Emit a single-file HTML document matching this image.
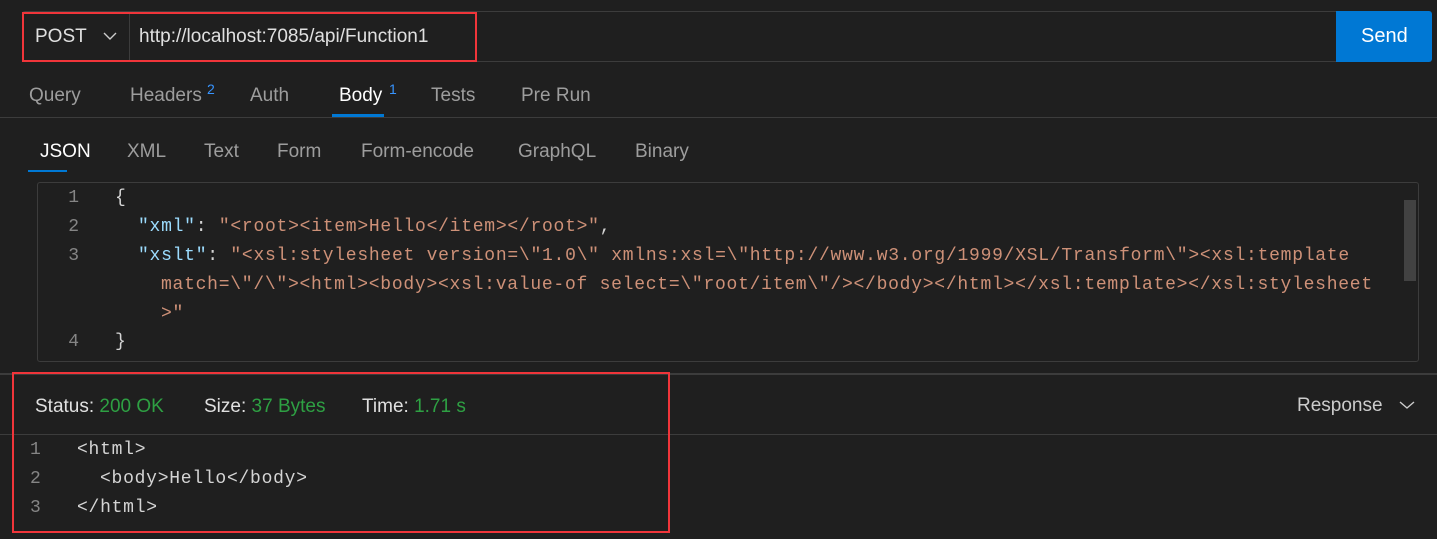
<!DOCTYPE html>
<html><head><meta charset="utf-8"><style>
*{margin:0;padding:0;box-sizing:border-box}
body{width:1437px;height:539px;background:#1f1f1f;position:relative;overflow:hidden;font-family:"Liberation Sans",sans-serif;color:#cccccc}
.a{position:absolute;white-space:pre}
.ui{font-size:19px;line-height:24px}
.mono{font-family:"Liberation Mono",monospace;font-size:18px;letter-spacing:0.74px;line-height:24px}
.k{color:#9cdcfe}.s{color:#ce9178}.p{color:#d4d4d4}
.ln{color:#858585;font-family:"Liberation Mono",monospace;font-size:18px;line-height:24px;text-align:right;width:30px}
.g{color:#2ea043}
</style></head><body>
<div class="a" style="left:22px;top:11px;width:1320px;height:51px;border:1px solid #3c3c3c;border-radius:3px"></div>
<div class="a" style="left:129px;top:12px;width:1px;height:49px;background:#3c3c3c"></div>
<div class="a" style="left:22px;top:12px;width:455px;height:50px;border:2px solid #f0353a"></div>
<div class="a ui" style="left:35px;top:25px;color:#e0e0e0">POST</div>
<svg class="a" style="left:102px;top:31px" width="16" height="10"><path d="M2 2 L8 8 L14 2" stroke="#cccccc" stroke-width="1.4" fill="none"/></svg>
<div class="a ui" style="left:139px;top:25px;color:#e0e0e0">http://localhost:7085/api/Function1</div>
<div class="a" style="left:1336px;top:11px;width:96px;height:51px;background:#0078d4;border-radius:0 3px 3px 0"></div>
<div class="a ui" style="left:1361px;top:24px;color:#fff;font-size:20px">Send</div>
<div class="a ui" style="left:29px;top:84px;color:#9d9d9d">Query</div>
<div class="a ui" style="left:130px;top:84px;color:#9d9d9d">Headers</div>
<div class="a" style="left:207px;top:81px;color:#3794ff;font-size:14px">2</div>
<div class="a ui" style="left:250px;top:84px;color:#9d9d9d">Auth</div>
<div class="a ui" style="left:339px;top:84px;color:#ffffff">Body</div>
<div class="a" style="left:389px;top:81px;color:#3794ff;font-size:14px">1</div>
<div class="a ui" style="left:431px;top:84px;color:#9d9d9d">Tests</div>
<div class="a ui" style="left:521px;top:84px;color:#9d9d9d">Pre Run</div>
<div class="a" style="left:0;top:117px;width:1437px;height:1px;background:#3c3c3c"></div>
<div class="a" style="left:332px;top:114px;width:52px;height:3px;background:#0078d4"></div>
<div class="a ui" style="left:40px;top:140px;color:#ffffff">JSON</div>
<div class="a ui" style="left:127px;top:140px;color:#9d9d9d">XML</div>
<div class="a ui" style="left:204px;top:140px;color:#9d9d9d">Text</div>
<div class="a ui" style="left:277px;top:140px;color:#9d9d9d">Form</div>
<div class="a ui" style="left:361px;top:140px;color:#9d9d9d">Form-encode</div>
<div class="a ui" style="left:518px;top:140px;color:#9d9d9d">GraphQL</div>
<div class="a ui" style="left:635px;top:140px;color:#9d9d9d">Binary</div>
<div class="a" style="left:28px;top:170px;width:39px;height:2px;background:#0078d4"></div>
<div class="a" style="left:37px;top:182px;width:1382px;height:180px;border:1px solid #3c3c3c;border-radius:3px"></div>
<div class="a" style="left:1404px;top:200px;width:12px;height:81px;background:#424242"></div>
<div class="a ln" style="left:49px;top:186px">1</div>
<div class="a ln" style="left:49px;top:215px">2</div>
<div class="a ln" style="left:49px;top:244px">3</div>
<div class="a ln" style="left:49px;top:330px">4</div>
<div class="a mono p" style="left:115px;top:186px">{</div>
<div class="a mono" style="left:138px;top:215px"><span class="k">"xml"</span><span class="p">: </span><span class="s">"&lt;root&gt;&lt;item&gt;Hello&lt;/item&gt;&lt;/root&gt;"</span><span class="p">,</span></div>
<div class="a mono" style="left:138px;top:244px"><span class="k">"xslt"</span><span class="p">: </span><span class="s">"&lt;xsl:stylesheet version=\"1.0\" xmlns:xsl=\"http://www.w3.org/1999/XSL/Transform\"&gt;&lt;xsl:template</span></div>
<div class="a mono s" style="left:161px;top:273px">match=\"/\"&gt;&lt;html&gt;&lt;body&gt;&lt;xsl:value-of select=\"root/item\"/&gt;&lt;/body&gt;&lt;/html&gt;&lt;/xsl:template&gt;&lt;/xsl:stylesheet</div>
<div class="a mono s" style="left:161px;top:302px">&gt;"</div>
<div class="a mono p" style="left:115px;top:330px">}</div>
<div class="a" style="left:0;top:373px;width:1437px;height:2px;background:#3c3c3c"></div>
<div class="a" style="left:0;top:434px;width:1437px;height:1px;background:#3c3c3c"></div>
<div class="a" style="left:12px;top:372px;width:658px;height:161px;border:2px solid #f0353a"></div>
<div class="a ui" style="left:35px;top:395px;color:#e0e0e0">Status: <span class="g">200 OK</span></div>
<div class="a ui" style="left:204px;top:395px;color:#e0e0e0">Size: <span class="g">37 Bytes</span></div>
<div class="a ui" style="left:362px;top:395px;color:#e0e0e0">Time: <span class="g">1.71 s</span></div>
<div class="a ui" style="left:1297px;top:394px;color:#cccccc">Response</div>
<svg class="a" style="left:1398px;top:400px" width="18" height="10"><path d="M2 2 L9 8 L16 2" stroke="#cccccc" stroke-width="1.4" fill="none"/></svg>
<div class="a ln" style="left:30px;top:438px;text-align:left">1</div>
<div class="a ln" style="left:30px;top:467px;text-align:left">2</div>
<div class="a ln" style="left:30px;top:496px;text-align:left">3</div>
<div class="a mono p" style="left:77px;top:438px">&lt;html&gt;</div>
<div class="a mono p" style="left:100px;top:467px">&lt;body&gt;Hello&lt;/body&gt;</div>
<div class="a mono p" style="left:77px;top:496px">&lt;/html&gt;</div>
</body></html>
